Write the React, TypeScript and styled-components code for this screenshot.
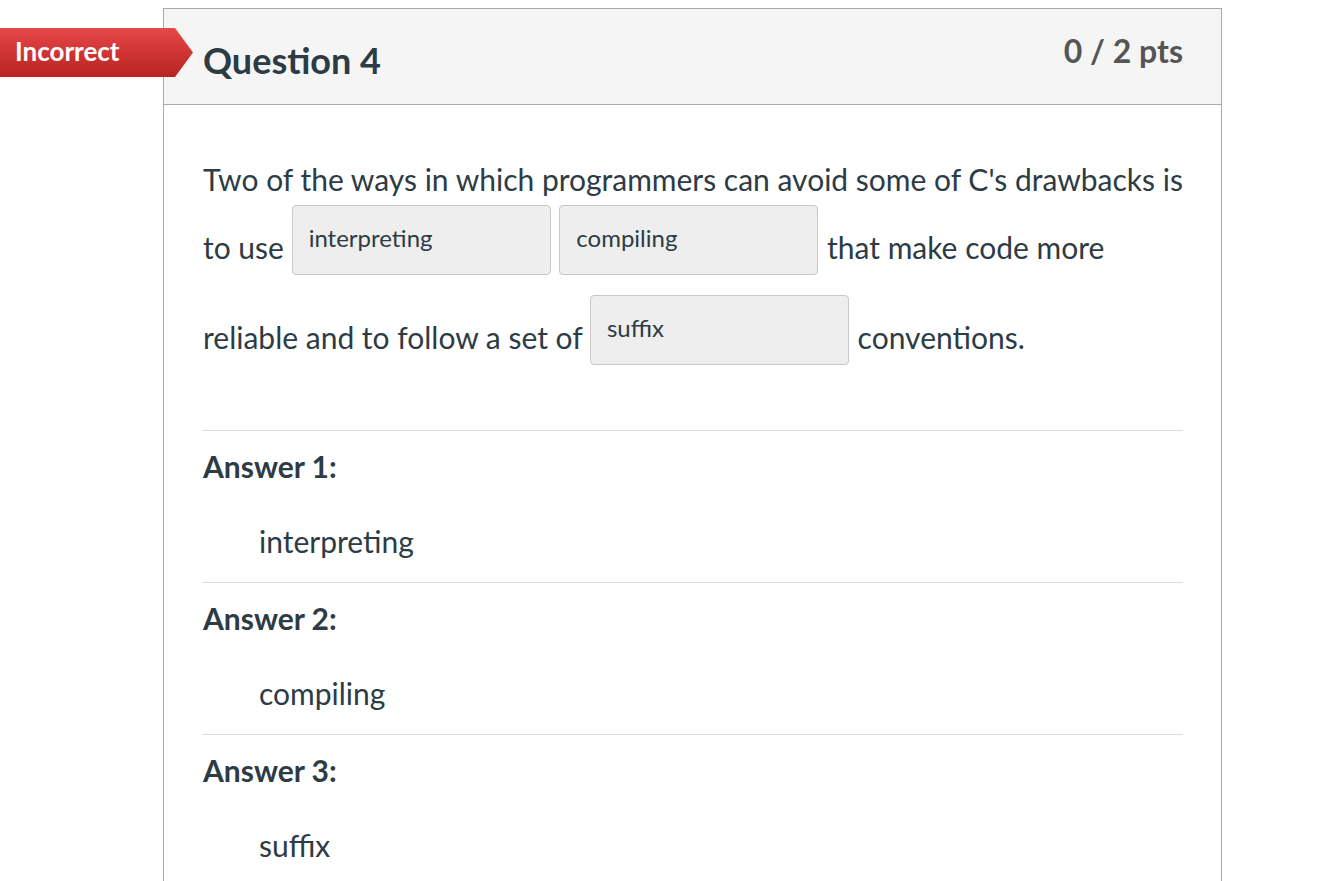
import React from "react";
import styled, { createGlobalStyle } from "styled-components";

const GlobalStyle = createGlobalStyle`
  html, body {
    margin: 0;
    padding: 0;
    background: #ffffff;
  }
  body {
    font-family: Lato, "Open Sans", "Liberation Sans", sans-serif;
    color: #2d3b45;
  }
`;

const Page = styled.div`
  position: relative;
  padding: 8px 0 0 163px;
  width: 1059px;
`;

const Badge = styled.div`
  position: absolute;
  left: 0;
  top: 28px;
  width: 193px;
  height: 49px;
  box-sizing: border-box;
  padding-left: 15px;
  padding-bottom: 3px;
  display: flex;
  align-items: center;
  background: linear-gradient(to bottom, #e64848 0%, #d13434 50%, #b72424 100%);
  clip-path: polygon(0 0, 175px 0, 193px 50%, 175px 100%, 0 100%);
  color: #ffffff;
  font-size: 26px;
  font-weight: 700;
  z-index: 2;
`;

const Card = styled.div`
  border: 1px solid #aaaaaa;
  border-bottom: none;
  min-height: 880px;
`;

const Header = styled.div`
  height: 96px;
  box-sizing: border-box;
  background: #f5f5f5;
  border-bottom: 1px solid #aaaaaa;
  padding: 0 38px 0 39px;
  display: flex;
  justify-content: space-between;
  align-items: flex-start;
`;

const Title = styled.h2`
  margin: 33px 0 0;
  font-size: 36px;
  line-height: 1;
  font-weight: 700;
  color: #2d3b45;
`;

const Points = styled.div`
  margin-top: 26px;
  font-size: 32px;
  line-height: 1;
  font-weight: 700;
  color: #555555;
`;

const Body = styled.div`
  padding: 54px 38px 0 39px;
`;

const QuestionText = styled.p`
  margin: 0;
  font-size: 30px;
  line-height: 40px;
  color: #2d3b45;
`;

const Blank = styled.span`
  display: inline-block;
  box-sizing: border-box;
  width: 259px;
  height: 70px;
  margin: 6px 1px 14px 0;
  padding: 20px 16px 0;
  vertical-align: 12px;
  background: #eeeeee;
  border: 1px solid #c8c8c8;
  border-radius: 4px;
  font-size: 24px;
  line-height: 24px;
  color: #2d3b45;
`;

const Answers = styled.div`
  margin-top: 51px;
`;

const AnswerGroup = styled.div`
  border-top: 1px solid #dddddd;
  padding: 15px 0 21px;
`;

const AnswerLabel = styled.div`
  font-size: 30px;
  line-height: 40px;
  font-weight: 700;
  color: #2d3b45;
`;

const AnswerValue = styled.div`
  margin-top: 35px;
  padding-left: 56px;
  font-size: 30px;
  line-height: 40px;
  color: #2d3b45;
`;

const answers = ["interpreting", "compiling", "suffix"];

export default function App() {
  return (
    <>
      <GlobalStyle />
      <Page>
        <Badge>Incorrect</Badge>
        <Card>
          <Header>
            <Title>Question 4</Title>
            <Points>0 / 2 pts</Points>
          </Header>
          <Body>
            <QuestionText>
              Two of the ways in which programmers can avoid some of C's drawbacks is to use{" "}
              <Blank>interpreting</Blank> <Blank>compiling</Blank> that make code more
              reliable and to follow a set of <Blank>suffix</Blank> conventions.
            </QuestionText>
            <Answers>
              {answers.map((a, i) => (
                <AnswerGroup key={i}>
                  <AnswerLabel>Answer {i + 1}:</AnswerLabel>
                  <AnswerValue>{a}</AnswerValue>
                </AnswerGroup>
              ))}
            </Answers>
          </Body>
        </Card>
      </Page>
    </>
  );
}
